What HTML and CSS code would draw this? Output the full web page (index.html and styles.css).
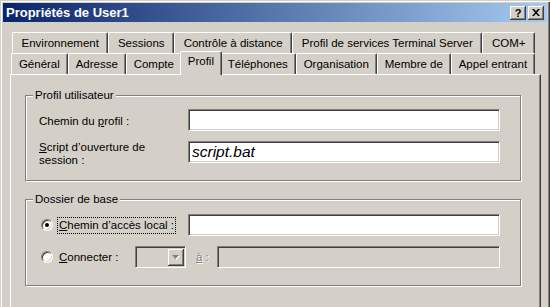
FILE: index.html
```html
<!DOCTYPE html>
<html lang="fr">

<head>
  <meta charset="UTF-8">
  <meta name="viewport" content="width=device-width, initial-scale=1.0">
  <title>Propriétés de User1</title>
  <link rel="stylesheet" href="styles.css">
</head>

<body>

  <div class="window">

    <!-- Title bar -->
    <div class="titlebar">
      <span class="title">Propriétés de User1</span>
      <div class="caption-buttons">
        <span class="cap-btn help">?</span>
        <span class="cap-btn close">
          <svg width="8" height="7" viewBox="0 0 8 7">
            <path d="M0,0 H2 L4,2.3 L6,0 H8 L5,3.5 L8,7 H6 L4,4.7 L2,7 H0 L3,3.5 Z" />
          </svg>
        </span>
      </div>
    </div>

    <div class="dialog">

      <!-- Tabs: back row, then the row attached to the panel -->
      <div class="tab-row back">
        <div class="tab">Environnement</div>
        <div class="tab">Sessions</div>
        <div class="tab">Contrôle à distance</div>
        <div class="tab">Profil de services Terminal Server</div>
        <div class="tab">COM+</div>
      </div>
      <div class="tab-row front">
        <div class="tab">Général</div>
        <div class="tab">Adresse</div>
        <div class="tab">Compte</div>
        <div class="tab active">Profil</div>
        <div class="tab">Téléphones</div>
        <div class="tab">Organisation</div>
        <div class="tab">Membre de</div>
        <div class="tab">Appel entrant</div>
      </div>

      <div class="panel">

        <fieldset class="group">
          <legend>Profil utilisateur</legend>
          <div class="form-grid">
            <label class="field-label">Chemin du <u>p</u>rofil :</label>
            <div class="textbox"></div>
            <label class="field-label"><u>S</u>cript d’ouverture de<br>session :</label>
            <div class="textbox filled">script.bat</div>
          </div>
        </fieldset>

        <fieldset class="group">
          <legend>Dossier de base</legend>
          <div class="choice-list">
            <div class="choice-row">
              <div class="choice wide">
                <span class="radio checked"></span>
                <span class="choice-label focused"><u>C</u>hemin d’accès local :</span>
              </div>
              <div class="textbox"></div>
            </div>
            <div class="choice-row">
              <div class="choice narrow">
                <span class="radio"></span>
                <span class="choice-label"><u>C</u>onnecter :</span>
              </div>
              <div class="combo">
                <span class="combo-btn">
                  <svg width="8" height="5" viewBox="0 0 8 5">
                    <path class="arrow-shadow" d="M1,1 H8 L4.5,5 Z" />
                    <path class="arrow" d="M0,0 H7 L3.5,4 Z" />
                  </svg>
                </span>
              </div>
              <span class="to-label"><u>à</u> :</span>
              <div class="textbox disabled"></div>
            </div>
          </div>
        </fieldset>

      </div>
    </div>
  </div>

</body>

</html>
```

FILE: styles.css
```css
* {
  box-sizing: border-box;
}

body {
  margin: 0;
  width: 550px;
  height: 307px;
  overflow: hidden;
  background: #d4d0c8;
  font-family: "Liberation Sans", Arial, sans-serif;
  font-size: 11.5px;
  color: #000;
}

.window {
  height: 307px;
  padding: 3px 3px 0 3px;
  background: #d4d0c8;
  /* classic raised window frame */
  box-shadow: inset 1px 1px #d4d0c8, inset 2px 2px #fff,
    inset -1px 0 #404040, inset -2px 0 #808080;
}

.titlebar {
  height: 19px;
  display: flex;
  align-items: center;
  justify-content: space-between;
  padding: 0 3px;
  background: linear-gradient(to right, #0a246a, #a6caf0);
}

.title {
  color: #fff;
  font-weight: bold;
  font-size: 13px;
}

.caption-buttons {
  display: flex;
  gap: 2px;
}

.cap-btn {
  width: 16px;
  height: 14px;
  display: flex;
  align-items: center;
  justify-content: center;
  background: #d4d0c8;
  box-shadow: inset -1px -1px #404040, inset 1px 1px #fff, inset -2px -2px #808080;
}

.help {
  font-weight: bold;
  font-size: 11px;
  line-height: 14px;
}

.close svg {
  fill: #000;
}

.dialog {
  padding: 10px 6px 0 7px;
}

/* Tabs */
.tab-row {
  display: flex;
  align-items: flex-start;
  height: 21px;
  margin: 0 6px 0 1px;
}

.tab-row.back {
  margin-left: 2px;
}

.tab {
  flex: 1 1 auto;
  height: 21px;
  padding: 0 6px;
  line-height: 20px;
  text-align: center;
  white-space: nowrap;
  background: #d4d0c8;
  border-top: 1px solid #fff;
  border-left: 1px solid #fff;
  border-right: 1px solid #404040;
  border-radius: 2px 2px 0 0;
  box-shadow: inset -1px 0 #808080;
}

.tab.active {
  position: relative;
  z-index: 1;
  height: 24px;
  margin: -2px -2px -1px;
  line-height: 19px;
}

.panel {
  height: 240px;
  padding: 13px 19px 0 14px;
  border-top: 1px solid #fff;
  border-left: 1px solid #fff;
  border-right: 1px solid #404040;
  box-shadow: inset -1px 0 #808080;
}

/* Group boxes */
.group {
  margin: 0 0 11px;
  padding: 0 0 17px 7px;
  min-width: 0;
  border: 1px solid #808080;
  /* etched line */
  box-shadow: inset 1px 1px #fff, 1px 1px #fff;
}

.group legend {
  padding: 0 2px;
  line-height: 14px;
  background: #d4d0c8;
}

.form-grid {
  display: grid;
  grid-template-columns: 149px 312px;
  grid-template-rows: 22px 22px;
  row-gap: 10px;
  align-items: center;
  padding: 7px 0 0 6px;
}

.field-label {
  padding-top: 3px;
  line-height: 13px;
  white-space: nowrap;
}

.textbox {
  width: 312px;
  height: 22px;
  display: flex;
  align-items: center;
  padding-left: 3px;
  background: #fff;
  border: 1px solid;
  border-color: #808080 #fff #fff #808080;
  box-shadow: inset 1px 1px #404040, inset -1px -1px #d4d0c8;
}

.textbox.filled {
  font-style: italic;
  font-size: 15.5px;
}

.textbox.disabled {
  width: auto;
  flex: 1;
  background: #d4d0c8;
}

.choice-list {
  display: flex;
  flex-direction: column;
  gap: 10px;
  padding: 8px 0 0 8px;
}

.choice-row {
  display: flex;
  align-items: center;
  width: 459px;
}

.choice {
  display: flex;
  align-items: center;
  gap: 5px;
  flex: none;
}

.choice.wide {
  width: 147px;
}

.choice.narrow {
  width: 94px;
}

.choice-label {
  padding: 1px;
  line-height: 13px;
  white-space: nowrap;
}

.choice-label.focused {
  outline: 1px dotted #000;
}

.radio {
  width: 12px;
  height: 12px;
  flex: none;
  display: flex;
  align-items: center;
  justify-content: center;
  border-radius: 50%;
  background: #fff;
  border: 1px solid;
  border-color: #808080 #fff #fff #808080;
  box-shadow: inset 1px 1px #404040, inset -1px -1px #d4d0c8;
}

.radio.checked::after {
  content: "";
  width: 4px;
  height: 4px;
  border-radius: 50%;
  background: #000;
}

.combo {
  width: 51px;
  height: 22px;
  flex: none;
  display: flex;
  justify-content: flex-end;
  padding: 1px;
  margin-right: 10px;
  background: #d4d0c8;
  border: 1px solid;
  border-color: #808080 #fff #fff #808080;
  box-shadow: inset 1px 1px #404040, inset -1px -1px #d4d0c8;
}

.combo-btn {
  width: 16px;
  display: flex;
  align-items: center;
  justify-content: center;
  margin: 1px 0 0;
  box-shadow: inset -1px -1px #404040, inset 1px 1px #fff, inset -2px -2px #808080;
}

.arrow {
  fill: #808080;
}

.arrow-shadow {
  fill: #fff;
}

.to-label {
  width: 21px;
  flex: none;
  color: #808080;
  text-shadow: 1px 1px #fff;
}
```
